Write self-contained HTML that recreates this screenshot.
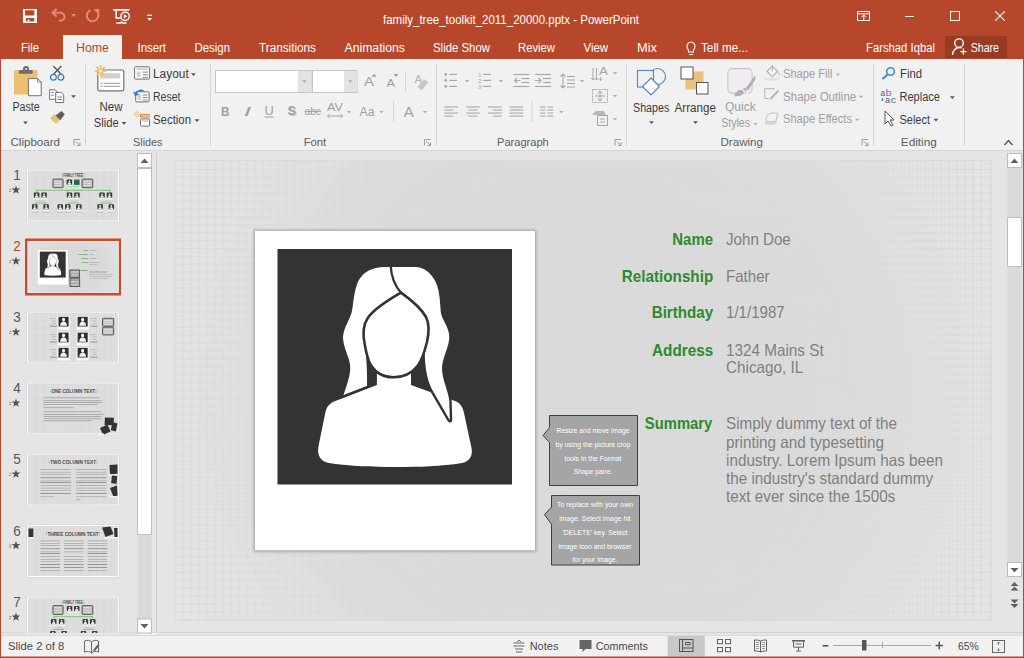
<!DOCTYPE html>
<html><head><meta charset="utf-8"><title>PowerPoint</title>
<style>
html,body{margin:0;padding:0;background:#E5E5E5;}
body{width:1024px;height:658px;overflow:hidden;position:relative;}
svg{position:absolute;left:0;top:0;display:block;}
text{font-family:"Liberation Sans",sans-serif;white-space:pre;}
</style></head><body>
<svg width="1024" height="658" viewBox="0 0 1024 658">
<rect x="0" y="0" width="1024" height="658" fill="#E5E5E5" />
<rect x="0" y="0" width="1024" height="59" fill="#B7472A" />
<rect x="1" y="59" width="1022" height="91" fill="#F1F1F1" />
<rect x="63" y="35" width="59" height="24" fill="#F1F1F1" />
<rect x="1" y="150" width="1022" height="1" fill="#D5D5D5" />
<rect x="1" y="633" width="1022" height="24" fill="#F1F1F1" />
<rect x="1" y="632" width="1022" height="1" fill="#D9D9D9" />
<rect x="23" y="9" width="14" height="14" fill="#FFFFFF" />
<rect x="25" y="10.3" width="9.3" height="5.2" fill="#B7472A" rx="0.8"/>
<rect x="26" y="18" width="8.3" height="3.4" fill="#B7472A" />
<rect x="27.6" y="19.6" width="1.8" height="1.8" fill="#FFFFFF" />
<path d="M52.5,12.8 h8 a4,4 0 0 1 0,8 h-1.5" fill="none" stroke="#D98C78" stroke-width="2" />
<path d="M56.5,9 l-4,3.8 l4,3.8" fill="none" stroke="#D98C78" stroke-width="2" />
<path d="M71,14 h5 l-2.5,2.9 z" fill="#D98C78" stroke="none" stroke-width="1" />
<path d="M90.5,10.3 A5.7,5.7 0 1 0 97.8,13.5" fill="none" stroke="#D98C78" stroke-width="2" />
<path d="M93.6,9.4 h5.2 v5.2 z" fill="#D98C78" stroke="none" stroke-width="1" />
<path d="M93.6,9.6 h5 M98.6,9.6 v4.5" fill="none" stroke="#D98C78" stroke-width="1.4" />
<rect x="113.3" y="9" width="16.1" height="1.7" fill="#FFFFFF" />
<path d="M116.2,10.5 v7.6 h4.6" fill="none" stroke="#FFFFFF" stroke-width="1.5" />
<circle cx="125.1" cy="16.3" r="4.2" fill="none" stroke="#FFFFFF" stroke-width="1.3"/>
<path d="M124,14.6 l2.8,1.7 l-2.8,1.7 z" fill="#FFFFFF" stroke="#FFFFFF" stroke-width="0.6" />
<path d="M116.3,23 h4.3 l0.8,-1.3 l0.8,1.3 h4.3" fill="none" stroke="#FFFFFF" stroke-width="1.3" />
<rect x="147.2" y="14.7" width="4.8" height="1.2" fill="#FFFFFF" />
<path d="M147.2,18 h4.8 l-2.4,2.9 z" fill="#FFFFFF" stroke="none" stroke-width="1" />
<text x="383" y="24" font-size="12" fill="#FFFFFF" textLength="256" lengthAdjust="spacingAndGlyphs" >family_tree_toolkit_2011_20000.pptx - PowerPoint</text>
<rect x="857.5" y="11.5" width="12" height="9" fill="none" stroke="#FFFFFF" stroke-width="1"/>
<line x1="857.5" y1="13.8" x2="869.5" y2="13.8" stroke="#FFFFFF" stroke-width="1" />
<path d="M861.3,17.3 l2.5,-2.5 l2.5,2.5 M863.8,15 v5.5" fill="none" stroke="#FFFFFF" stroke-width="1" />
<line x1="905" y1="16.5" x2="914" y2="16.5" stroke="#FFFFFF" stroke-width="1" />
<rect x="950.5" y="11.5" width="9" height="9" fill="none" stroke="#FFFFFF" stroke-width="1"/>
<path d="M995.3,11.3 l9.4,9.4 M1004.7,11.3 l-9.4,9.4" fill="none" stroke="#FFFFFF" stroke-width="1.1" />
<text x="21" y="51.9" font-size="12" fill="#FFFFFF" textLength="18" lengthAdjust="spacingAndGlyphs" >File</text>
<text x="76" y="51.9" font-size="12" fill="#B7472A" textLength="33" lengthAdjust="spacingAndGlyphs" >Home</text>
<text x="137.5" y="51.9" font-size="12" fill="#FFFFFF" textLength="28.5" lengthAdjust="spacingAndGlyphs" >Insert</text>
<text x="194.5" y="51.9" font-size="12" fill="#FFFFFF" textLength="35.5" lengthAdjust="spacingAndGlyphs" >Design</text>
<text x="259" y="51.9" font-size="12" fill="#FFFFFF" textLength="57" lengthAdjust="spacingAndGlyphs" >Transitions</text>
<text x="344.5" y="51.9" font-size="12" fill="#FFFFFF" textLength="60.5" lengthAdjust="spacingAndGlyphs" >Animations</text>
<text x="433" y="51.9" font-size="12" fill="#FFFFFF" textLength="57" lengthAdjust="spacingAndGlyphs" >Slide Show</text>
<text x="518" y="51.9" font-size="12" fill="#FFFFFF" textLength="37" lengthAdjust="spacingAndGlyphs" >Review</text>
<text x="583.5" y="51.9" font-size="12" fill="#FFFFFF" textLength="24.5" lengthAdjust="spacingAndGlyphs" >View</text>
<text x="637" y="51.9" font-size="12" fill="#FFFFFF" textLength="20" lengthAdjust="spacingAndGlyphs" >Mix</text>
<path d="M688.5,50 a4,4.5 0 1 1 5,0 v2 h-5 z" fill="none" stroke="#FFFFFF" stroke-width="1.1" />
<line x1="689" y1="54.5" x2="693" y2="54.5" stroke="#FFFFFF" stroke-width="1" />
<text x="701" y="51.9" font-size="12" fill="#FFFFFF" textLength="47" lengthAdjust="spacingAndGlyphs" >Tell me...</text>
<text x="866" y="51.9" font-size="12" fill="#FFFFFF" textLength="69" lengthAdjust="spacingAndGlyphs" >Farshad Iqbal</text>
<rect x="945" y="36" width="62" height="22" fill="#973B23" />
<circle cx="959" cy="43.1" r="4.3" fill="none" stroke="#FFFFFF" stroke-width="1.3"/>
<path d="M952.4,55 c0.3,-4 3,-7.5 6.8,-7.5 c1,0 1.8,0.2 2.4,0.5" fill="none" stroke="#FFFFFF" stroke-width="1.3" />
<path d="M963.4,48.5 v6.2 M960.3,51.6 h6.2" fill="none" stroke="#FFFFFF" stroke-width="1.3" />
<text x="970.8" y="51.7" font-size="12.8" fill="#FFFFFF" textLength="28.2" lengthAdjust="spacingAndGlyphs" >Share</text>
<line x1="85.5" y1="64" x2="85.5" y2="146" stroke="#D4D4D4" stroke-width="1" />
<line x1="210.5" y1="64" x2="210.5" y2="146" stroke="#D4D4D4" stroke-width="1" />
<line x1="436.5" y1="64" x2="436.5" y2="146" stroke="#D4D4D4" stroke-width="1" />
<line x1="626.5" y1="64" x2="626.5" y2="146" stroke="#D4D4D4" stroke-width="1" />
<line x1="873.5" y1="64" x2="873.5" y2="146" stroke="#D4D4D4" stroke-width="1" />
<line x1="964.5" y1="64" x2="964.5" y2="146" stroke="#D4D4D4" stroke-width="1" />
<text x="10.5" y="145.6" font-size="11" fill="#5C5C5C" textLength="49.5" lengthAdjust="spacingAndGlyphs" >Clipboard</text>
<text x="133" y="145.6" font-size="11" fill="#5C5C5C" textLength="29.5" lengthAdjust="spacingAndGlyphs" >Slides</text>
<text x="303.75" y="145.6" font-size="11" fill="#5C5C5C" textLength="22.5" lengthAdjust="spacingAndGlyphs" >Font</text>
<text x="497" y="145.6" font-size="11" fill="#5C5C5C" textLength="51.75" lengthAdjust="spacingAndGlyphs" >Paragraph</text>
<text x="720.5" y="145.6" font-size="11" fill="#5C5C5C" textLength="42.5" lengthAdjust="spacingAndGlyphs" >Drawing</text>
<text x="900.8" y="145.6" font-size="11" fill="#5C5C5C" textLength="36" lengthAdjust="spacingAndGlyphs" >Editing</text>
<path d="M74,145.5 v-6 h6" fill="none" stroke="#9A9A9A" stroke-width="1" />
<path d="M76,141.5 l4,4 M80,142.5 v3 h-3" fill="none" stroke="#9A9A9A" stroke-width="1" />
<path d="M424.5,145.5 v-6 h6" fill="none" stroke="#9A9A9A" stroke-width="1" />
<path d="M426.5,141.5 l4,4 M430.5,142.5 v3 h-3" fill="none" stroke="#9A9A9A" stroke-width="1" />
<path d="M615,145.5 v-6 h6" fill="none" stroke="#9A9A9A" stroke-width="1" />
<path d="M617,141.5 l4,4 M621,142.5 v3 h-3" fill="none" stroke="#9A9A9A" stroke-width="1" />
<path d="M862,145.5 v-6 h6" fill="none" stroke="#9A9A9A" stroke-width="1" />
<path d="M864,141.5 l4,4 M868,142.5 v3 h-3" fill="none" stroke="#9A9A9A" stroke-width="1" />
<path d="M1004.5,145 l4,-4.5 l4,4.5" fill="none" stroke="#555" stroke-width="1.4" />
<rect x="14" y="70" width="23.4" height="24.6" fill="#EDC070" rx="1.5"/>
<rect x="18.8" y="70.1" width="13.9" height="3.7" fill="#6E6E6E" rx="0.8"/>
<path d="M23,71 v-2.5 a3,2.5 0 0 1 6,0 v2.5 z" fill="#6E6E6E" stroke="none" stroke-width="1" />
<circle cx="26" cy="69" r="0.9" fill="#F1F1F1"/>
<path d="M28.4,78.6 h9.3 l3.5,3.5 v13.6 h-12.8 z" fill="#FFFFFF" stroke="#707070" stroke-width="1" />
<path d="M37.7,78.6 v3.5 h3.5" fill="none" stroke="#707070" stroke-width="0.8" />
<text x="12.4" y="111.4" font-size="12" fill="#3C3C3C" textLength="27.2" lengthAdjust="spacingAndGlyphs" >Paste</text>
<path d="M23.1,121.6 L27.9,121.6 L25.5,124.3 Z" fill="#555"/>
<path d="M53.3,65.9 l8,8.5 M61.3,65.9 l-8,8.5" fill="none" stroke="#5A5A5A" stroke-width="1.4" />
<circle cx="53.4" cy="77.2" r="2.9" fill="none" stroke="#3E7CC2" stroke-width="1.2"/>
<circle cx="60.9" cy="77.2" r="2.9" fill="none" stroke="#3E7CC2" stroke-width="1.2"/>
<path d="M49.6,89.8 h5.5 l2.5,2.5 v7 h-8 z" fill="#FFF" stroke="#707070" stroke-width="1" />
<path d="M55.7,92.4 h5.5 l2.5,2.5 v7.7 h-8 z" fill="#FFF" stroke="#707070" stroke-width="1" />
<path d="M51.3,92.5 h2.5 M51.3,95.3 h2.5 M57.5,97 h4.5 M57.5,99.5 h4.5" fill="none" stroke="#3E7CC2" stroke-width="0.9" />
<path d="M71.1,95.2 L75.9,95.2 L73.5,97.9 Z" fill="#555"/>
<path d="M50.2,118.2 l4.2,-4.2 l5.8,5.8 l-4.2,4.2 z" fill="#EDC070" stroke="none" stroke-width="1" />
<path d="M55.5,115.5 l6,-4.5 l3.3,3.3 l-4.5,6 z" fill="#5F5F5F" stroke="none" stroke-width="1" />
<rect x="97.8" y="70" width="26" height="20.8" fill="#FFF" rx="1.5" stroke="#707070" stroke-width="1.2"/>
<rect x="100.6" y="73.2" width="19.7" height="5.3" fill="#D0D0D0" />
<path d="M100.6,83.3 h2.2 M103.8,83.3 h16.5 M100.6,86.3 h2.2 M103.8,86.3 h16.5" fill="none" stroke="#8A8A8A" stroke-width="0.9" />
<line x1="102.40" y1="71.00" x2="106.50" y2="71.00" stroke="#EDC070" stroke-width="1.7"/>
<line x1="101.87" y1="72.27" x2="104.77" y2="75.17" stroke="#EDC070" stroke-width="1.7"/>
<line x1="100.60" y1="72.80" x2="100.60" y2="76.90" stroke="#EDC070" stroke-width="1.7"/>
<line x1="99.33" y1="72.27" x2="96.43" y2="75.17" stroke="#EDC070" stroke-width="1.7"/>
<line x1="98.80" y1="71.00" x2="94.70" y2="71.00" stroke="#EDC070" stroke-width="1.7"/>
<line x1="99.33" y1="69.73" x2="96.43" y2="66.83" stroke="#EDC070" stroke-width="1.7"/>
<line x1="100.60" y1="69.20" x2="100.60" y2="65.10" stroke="#EDC070" stroke-width="1.7"/>
<line x1="101.87" y1="69.73" x2="104.77" y2="66.83" stroke="#EDC070" stroke-width="1.7"/>
<circle cx="100.6" cy="71" r="2.4" fill="#EDC070"/>
<circle cx="100.6" cy="71" r="1.3" fill="#FFFFFF"/>
<text x="99.5" y="111.4" font-size="12" fill="#3C3C3C" textLength="23" lengthAdjust="spacingAndGlyphs" >New</text>
<text x="93.75" y="127.4" font-size="12" fill="#3C3C3C" textLength="25" lengthAdjust="spacingAndGlyphs" >Slide</text>
<path d="M121.5,122.05 L126.5,122.05 L124,124.85 Z" fill="#555"/>
<rect x="134.6" y="66.8" width="15" height="12.3" fill="#FFF" rx="1" stroke="#707070" stroke-width="1"/>
<rect x="136.5" y="68.2" width="11.5" height="1.8" fill="#D0D0D0" />
<rect x="136.8" y="71.6" width="3.7" height="5.3" fill="#D0D0D0" />
<path d="M142.7,72.1 h5.3 M142.7,74.8 h5.3 M142.7,77.4 h5.3" fill="none" stroke="#7A7A7A" stroke-width="0.9" />
<text x="153" y="78.4" font-size="12" fill="#3C3C3C" textLength="35.75" lengthAdjust="spacingAndGlyphs" >Layout</text>
<path d="M191.1,73.3 L195.9,73.3 L193.5,76.0 Z" fill="#555"/>
<rect x="135.7" y="91.8" width="13.4" height="10.1" fill="#FFF" rx="1" stroke="#707070" stroke-width="1"/>
<rect x="137.5" y="94.5" width="3.7" height="5.5" fill="#D0D0D0" />
<path d="M142.7,95 h5 M142.7,97.5 h5 M142.7,100 h5" fill="none" stroke="#7A7A7A" stroke-width="0.9" />
<path d="M135.5,94.5 C136.5,91 140,89.5 143.5,91" fill="none" stroke="#3E7CC2" stroke-width="1.6" />
<path d="M133.2,91.5 l1.8,4.8 l4.5,-2 z" fill="#3E7CC2" stroke="none" stroke-width="1" />
<text x="153" y="101.4" font-size="12" fill="#3C3C3C" textLength="27.5" lengthAdjust="spacingAndGlyphs" >Reset</text>
<rect x="140" y="114" width="10.1" height="3.4" fill="#E8823C" rx="1"/>
<rect x="141.5" y="115.2" width="8.6" height="1.1" fill="#F1F1F1" />
<rect x="140.5" y="118.9" width="9.1" height="7.2" fill="#FFF" rx="1" stroke="#707070" stroke-width="1"/>
<path d="M142,121 h6" fill="none" stroke="#A0A0A0" stroke-width="0.9" />
<line x1="137.80" y1="114.10" x2="140.10" y2="114.10" stroke="#EDC070" stroke-width="1"/>
<line x1="137.51" y1="114.81" x2="139.13" y2="116.43" stroke="#EDC070" stroke-width="1"/>
<line x1="136.80" y1="115.10" x2="136.80" y2="117.40" stroke="#EDC070" stroke-width="1"/>
<line x1="136.09" y1="114.81" x2="134.47" y2="116.43" stroke="#EDC070" stroke-width="1"/>
<line x1="135.80" y1="114.10" x2="133.50" y2="114.10" stroke="#EDC070" stroke-width="1"/>
<line x1="136.09" y1="113.39" x2="134.47" y2="111.77" stroke="#EDC070" stroke-width="1"/>
<line x1="136.80" y1="113.10" x2="136.80" y2="110.80" stroke="#EDC070" stroke-width="1"/>
<line x1="137.51" y1="113.39" x2="139.13" y2="111.77" stroke="#EDC070" stroke-width="1"/>
<text x="153" y="124.4" font-size="12" fill="#3C3C3C" textLength="38" lengthAdjust="spacingAndGlyphs" >Section</text>
<path d="M194.6,119.3 L199.4,119.3 L197,122.0 Z" fill="#555"/>
<rect x="215.5" y="70.5" width="95.5" height="22" fill="#FFFFFF" stroke="#C6C6C6" stroke-width="1"/>
<rect x="298" y="71" width="12.5" height="21" fill="#E3E3E3" />
<path d="M302.1,80.3 L306.9,80.3 L304.5,83.0 Z" fill="#B0B0B0"/>
<rect x="312.5" y="70.5" width="44.5" height="22" fill="#FFFFFF" stroke="#C6C6C6" stroke-width="1"/>
<rect x="344" y="71" width="12.5" height="21" fill="#E3E3E3" />
<path d="M348.1,80.3 L352.9,80.3 L350.5,83.0 Z" fill="#B0B0B0"/>
<text x="364" y="86.3" font-size="13.5" fill="#A0A0A0" textLength="10" lengthAdjust="spacingAndGlyphs" >A</text>
<path d="M371.5,76.8 l2.6,-3 l2.6,3 z" fill="#A0A0A0" stroke="none" stroke-width="1" />
<text x="386.5" y="86.5" font-size="11.5" fill="#A0A0A0" textLength="8.5" lengthAdjust="spacingAndGlyphs" >A</text>
<path d="M393.5,74 h5 l-2.5,3 z" fill="#A0A0A0" stroke="none" stroke-width="1" />
<line x1="405.5" y1="71" x2="405.5" y2="92" stroke="#D4D4D4" stroke-width="1" />
<text x="414.5" y="82.5" font-size="10" fill="#B5B5B5" textLength="7.5" lengthAdjust="spacingAndGlyphs" >A</text>
<path d="M419,85 l5,-6 l4,3.5 l-5,6 z" fill="#C4C4C4" stroke="none" stroke-width="1" />
<path d="M417.5,87 l2,-2.5 l4,3.5 l-2,2.5 z" fill="#C9C9C9" stroke="none" stroke-width="1" />
<text x="221" y="115.5" font-size="12" fill="#A0A0A0" font-weight="bold" textLength="8.5" lengthAdjust="spacingAndGlyphs" >B</text>
<text x="243.75" y="115.5" font-size="12" fill="#A0A0A0" textLength="7.5" lengthAdjust="spacingAndGlyphs" font-style="italic" font-family="Liberation Serif">I</text>
<text x="264.5" y="114.9" font-size="12" fill="#A0A0A0" textLength="9.25" lengthAdjust="spacingAndGlyphs" >U</text>
<line x1="264.5" y1="117" x2="273.75" y2="117" stroke="#A0A0A0" stroke-width="1" />
<text x="288.5" y="115.5" font-size="12" fill="#C4C4C4" font-weight="bold" textLength="8.5" lengthAdjust="spacingAndGlyphs" >S</text>
<text x="287.5" y="114.5" font-size="12" fill="#A0A0A0" font-weight="bold" textLength="8.5" lengthAdjust="spacingAndGlyphs" >S</text>
<text x="304.5" y="115" font-size="11" fill="#A0A0A0" textLength="16.5" lengthAdjust="spacingAndGlyphs" >abc</text>
<line x1="304.5" y1="111.5" x2="321" y2="111.5" stroke="#A0A0A0" stroke-width="0.9" />
<text x="327" y="111" font-size="10" fill="#A0A0A0" textLength="16" lengthAdjust="spacingAndGlyphs" >AV</text>
<path d="M327.5,116 h15 M329.5,114 l-2,2 l2,2 M340.5,114 l2,2 l-2,2" fill="none" stroke="#A0A0A0" stroke-width="0.9" />
<path d="M346.8,110.9 L351.2,110.9 L349,113.39999999999999 Z" fill="#B0B0B0"/>
<text x="359.5" y="115.5" font-size="12" fill="#A0A0A0" textLength="15" lengthAdjust="spacingAndGlyphs" >Aa</text>
<path d="M379.3,110.9 L383.7,110.9 L381.5,113.39999999999999 Z" fill="#B0B0B0"/>
<line x1="393.5" y1="101" x2="393.5" y2="122" stroke="#D4D4D4" stroke-width="1" />
<text x="403.75" y="116.5" font-size="14" fill="#A0A0A0" textLength="10" lengthAdjust="spacingAndGlyphs" >A</text>
<path d="M422.8,110.9 L427.2,110.9 L425,113.39999999999999 Z" fill="#B0B0B0"/>
<circle cx="445.7" cy="74.4" r="1.4" fill="#A8A8A8"/>
<line x1="449.3" y1="74.4" x2="457.1" y2="74.4" stroke="#A8A8A8" stroke-width="1.2" />
<circle cx="445.7" cy="80.4" r="1.4" fill="#A8A8A8"/>
<line x1="449.3" y1="80.4" x2="457.1" y2="80.4" stroke="#A8A8A8" stroke-width="1.2" />
<circle cx="445.7" cy="86.4" r="1.4" fill="#A8A8A8"/>
<line x1="449.3" y1="86.4" x2="457.1" y2="86.4" stroke="#A8A8A8" stroke-width="1.2" />
<path d="M464.8,79.9 L469.2,79.9 L467,82.39999999999999 Z" fill="#B0B0B0"/>
<text x="478.0" y="77.2" font-size="6" fill="#A8A8A8" textLength="3.5" lengthAdjust="spacingAndGlyphs" >1</text>
<line x1="483.3" y1="74.4" x2="491.1" y2="74.4" stroke="#A8A8A8" stroke-width="1.2" />
<text x="478.0" y="83.2" font-size="6" fill="#A8A8A8" textLength="3.5" lengthAdjust="spacingAndGlyphs" >2</text>
<line x1="483.3" y1="80.4" x2="491.1" y2="80.4" stroke="#A8A8A8" stroke-width="1.2" />
<text x="478.0" y="89.2" font-size="6" fill="#A8A8A8" textLength="3.5" lengthAdjust="spacingAndGlyphs" >3</text>
<line x1="483.3" y1="86.4" x2="491.1" y2="86.4" stroke="#A8A8A8" stroke-width="1.2" />
<path d="M498.8,79.9 L503.2,79.9 L501,82.39999999999999 Z" fill="#B0B0B0"/>
<line x1="513.5" y1="74.5" x2="529.5" y2="74.5" stroke="#A8A8A8" stroke-width="1.1" />
<line x1="521.5" y1="78.5" x2="529.5" y2="78.5" stroke="#A8A8A8" stroke-width="1.1" />
<line x1="521.5" y1="82.5" x2="529.5" y2="82.5" stroke="#A8A8A8" stroke-width="1.1" />
<line x1="513.5" y1="86.5" x2="529.5" y2="86.5" stroke="#A8A8A8" stroke-width="1.1" />
<path d="M520.5,80.5 h-6 M517.0,78 l-2.5,2.5 l2.5,2.5" fill="none" stroke="#A8A8A8" stroke-width="1.1" />
<line x1="535" y1="74.5" x2="551" y2="74.5" stroke="#A8A8A8" stroke-width="1.1" />
<line x1="543" y1="78.5" x2="551" y2="78.5" stroke="#A8A8A8" stroke-width="1.1" />
<line x1="543" y1="82.5" x2="551" y2="82.5" stroke="#A8A8A8" stroke-width="1.1" />
<line x1="535" y1="86.5" x2="551" y2="86.5" stroke="#A8A8A8" stroke-width="1.1" />
<path d="M535,80.5 h6 M538.5,78 l2.5,2.5 l-2.5,2.5" fill="none" stroke="#A8A8A8" stroke-width="1.1" />
<path d="M563,74 v14 M560.5,76.5 l2.5,-2.5 l2.5,2.5 M560.5,85.5 l2.5,2.5 l2.5,-2.5" fill="none" stroke="#A8A8A8" stroke-width="1.1" />
<line x1="567" y1="76.5" x2="575" y2="76.5" stroke="#A8A8A8" stroke-width="1.1" />
<line x1="567" y1="80.0" x2="575" y2="80.0" stroke="#A8A8A8" stroke-width="1.1" />
<line x1="567" y1="83.5" x2="575" y2="83.5" stroke="#A8A8A8" stroke-width="1.1" />
<line x1="567" y1="87.0" x2="575" y2="87.0" stroke="#A8A8A8" stroke-width="1.1" />
<path d="M579.8,79.9 L584.2,79.9 L582,82.39999999999999 Z" fill="#B0B0B0"/>
<path d="M593,68 v12 M596.5,68 v12 M591,78 l2,2 l2,-2 M594.5,78 l2,2 l2,-2" fill="none" stroke="#A8A8A8" stroke-width="1" />
<text x="599" y="75" font-size="10" fill="#A8A8A8" textLength="9" lengthAdjust="spacingAndGlyphs" >A</text>
<path d="M600.5,77 v3.5 M599,78.5 l1.5,2 l1.5,-2" fill="none" stroke="#A8A8A8" stroke-width="0.9" />
<path d="M612.8,71.9 L617.2,71.9 L615,74.39999999999999 Z" fill="#B0B0B0"/>
<rect x="592.5" y="89.5" width="15" height="13" fill="none" stroke="#A8A8A8" stroke-width="1" stroke-dasharray="2,1"/>
<path d="M600,91 v10 M597.5,93.5 l2.5,-2.5 l2.5,2.5 M597.5,98.5 l2.5,2.5 l2.5,-2.5 M595,96 h10" fill="none" stroke="#A8A8A8" stroke-width="1" />
<path d="M612.8,94.9 L617.2,94.9 L615,97.39999999999999 Z" fill="#B0B0B0"/>
<path d="M592,115 l4,-4 h8 l2,4 z" fill="#B8B8B8" stroke="none" stroke-width="1" />
<rect x="597.5" y="115.5" width="10" height="10" fill="#F1F1F1" stroke="#A8A8A8" stroke-width="1"/>
<path d="M600,119 h5 M600,122 h5" fill="none" stroke="#A8A8A8" stroke-width="1" />
<path d="M612.8,117.9 L617.2,117.9 L615,120.39999999999999 Z" fill="#B0B0B0"/>
<line x1="444.25" y1="107.0" x2="458.0" y2="107.0" stroke="#A8A8A8" stroke-width="1.1" />
<line x1="444.25" y1="110.03" x2="453.25" y2="110.03" stroke="#A8A8A8" stroke-width="1.1" />
<line x1="444.25" y1="113.06" x2="458.0" y2="113.06" stroke="#A8A8A8" stroke-width="1.1" />
<line x1="444.25" y1="116.09" x2="453.25" y2="116.09" stroke="#A8A8A8" stroke-width="1.1" />
<line x1="466.25" y1="107.0" x2="480.0" y2="107.0" stroke="#A8A8A8" stroke-width="1.1" />
<line x1="468.625" y1="110.03" x2="477.625" y2="110.03" stroke="#A8A8A8" stroke-width="1.1" />
<line x1="466.25" y1="113.06" x2="480.0" y2="113.06" stroke="#A8A8A8" stroke-width="1.1" />
<line x1="468.625" y1="116.09" x2="477.625" y2="116.09" stroke="#A8A8A8" stroke-width="1.1" />
<line x1="488.0" y1="107.0" x2="501.75" y2="107.0" stroke="#A8A8A8" stroke-width="1.1" />
<line x1="492.75" y1="110.03" x2="501.75" y2="110.03" stroke="#A8A8A8" stroke-width="1.1" />
<line x1="488.0" y1="113.06" x2="501.75" y2="113.06" stroke="#A8A8A8" stroke-width="1.1" />
<line x1="492.75" y1="116.09" x2="501.75" y2="116.09" stroke="#A8A8A8" stroke-width="1.1" />
<line x1="509.5" y1="107.0" x2="523.25" y2="107.0" stroke="#A8A8A8" stroke-width="1.1" />
<line x1="509.5" y1="110.03" x2="523.25" y2="110.03" stroke="#A8A8A8" stroke-width="1.1" />
<line x1="509.5" y1="113.06" x2="523.25" y2="113.06" stroke="#A8A8A8" stroke-width="1.1" />
<line x1="509.5" y1="116.09" x2="523.25" y2="116.09" stroke="#A8A8A8" stroke-width="1.1" />
<line x1="531.75" y1="101" x2="531.75" y2="122" stroke="#D4D4D4" stroke-width="1" />
<line x1="540" y1="107.0" x2="545.5" y2="107.0" stroke="#A8A8A8" stroke-width="1.1" />
<line x1="547.5" y1="107.0" x2="553.25" y2="107.0" stroke="#A8A8A8" stroke-width="1.1" />
<line x1="540" y1="110.03" x2="545.5" y2="110.03" stroke="#A8A8A8" stroke-width="1.1" />
<line x1="547.5" y1="110.03" x2="553.25" y2="110.03" stroke="#A8A8A8" stroke-width="1.1" />
<line x1="540" y1="113.06" x2="545.5" y2="113.06" stroke="#A8A8A8" stroke-width="1.1" />
<line x1="547.5" y1="113.06" x2="553.25" y2="113.06" stroke="#A8A8A8" stroke-width="1.1" />
<line x1="540" y1="116.09" x2="545.5" y2="116.09" stroke="#A8A8A8" stroke-width="1.1" />
<line x1="547.5" y1="116.09" x2="553.25" y2="116.09" stroke="#A8A8A8" stroke-width="1.1" />
<path d="M559.3,110.9 L563.7,110.9 L561.5,113.39999999999999 Z" fill="#B0B0B0"/>
<circle cx="657.5" cy="76.5" r="8" fill="none" stroke="#4A88CC" stroke-width="1.1"/>
<rect x="637.5" y="70.5" width="16" height="16.5" fill="#F1F1F1" stroke="#4A88CC" stroke-width="1.1"/>
<path d="M651,78 l8.5,8.5 l-8.5,8.5 l-8.5,-8.5 z" fill="#FFFFFF" stroke="#4A88CC" stroke-width="1.2" />
<text x="633" y="112.4" font-size="12" fill="#3C3C3C" textLength="36.25" lengthAdjust="spacingAndGlyphs" >Shapes</text>
<path d="M649.1,121.3 L653.9,121.3 L651.5,124.0 Z" fill="#555"/>
<rect x="685.5" y="71.5" width="18" height="18" fill="#EBC07A" />
<rect x="681" y="67" width="12" height="12" fill="#FFFFFF" stroke="#555" stroke-width="1"/>
<rect x="696.5" y="82.5" width="11.5" height="11.5" fill="#FFFFFF" stroke="#555" stroke-width="1"/>
<text x="674.5" y="112.4" font-size="12" fill="#3C3C3C" textLength="41.5" lengthAdjust="spacingAndGlyphs" >Arrange</text>
<path d="M693.1,121.3 L697.9,121.3 L695.5,124.0 Z" fill="#555"/>
<rect x="727.9" y="68.7" width="24.2" height="24.4" fill="#F1EDF3" rx="4" stroke="#C8C8C8" stroke-width="1.2"/>
<path d="M744,91 l3,-3 l3,3 l-3,3 z" fill="#F1F1F1" stroke="none" stroke-width="1" />
<path d="M745.5,88.5 l9.5,-13 l0.5,3.5 l-7,11 z" fill="#B0B0B0" stroke="none" stroke-width="1" />
<path d="M744.5,87.5 l2.8,2.8 l-1.5,1.5 l-2.8,-2.8 z" fill="#B0B0B0" stroke="none" stroke-width="1" />
<path d="M734,96.3 c1.5,-3 3.5,-6.5 7,-6.5 c1.5,0 2.5,1 2.5,2.5 c0,2.5 -3,4 -9.5,4 z" fill="#B0B0B0" stroke="none" stroke-width="1" />
<text x="725" y="111.3" font-size="12" fill="#A0A0A0" textLength="30.75" lengthAdjust="spacingAndGlyphs" >Quick</text>
<text x="721.25" y="127.3" font-size="12" fill="#A0A0A0" textLength="28.75" lengthAdjust="spacingAndGlyphs" >Styles</text>
<path d="M753.3,122.9 L757.7,122.9 L755.5,125.39999999999999 Z" fill="#B0B0B0"/>
<path d="M767,71.5 l5.3,-5.3 l5.3,5.3 l-5.3,5.3 z" fill="#F5F5F5" stroke="#B0B0B0" stroke-width="1.1" />
<path d="M772.3,71.5 v-6 M777.6,71.5 c1.5,1.5 2,3 1.5,4" fill="none" stroke="#B0B0B0" stroke-width="1" />
<rect x="764.3" y="77.8" width="15.3" height="2.8" fill="#E6DEE8" />
<text x="783" y="78.4" font-size="12" fill="#A0A0A0" textLength="49.5" lengthAdjust="spacingAndGlyphs" >Shape Fill</text>
<path d="M835.5999999999999,73.4 L840.0,73.4 L837.8,75.89999999999999 Z" fill="#B0B0B0"/>
<path d="M774.5,88.7 h-9.7 v9.8 h4" fill="none" stroke="#B0B0B0" stroke-width="1" />
<path d="M770.3,97.8 l7.5,-7.8 l1.3,1.3 l-7.5,7.8 l-1.8,0.5 z" fill="#B0B0B0" stroke="none" stroke-width="1" />
<text x="783" y="100.6" font-size="12" fill="#A0A0A0" textLength="73.25" lengthAdjust="spacingAndGlyphs" >Shape Outline</text>
<path d="M858.8,95.7 L863.2,95.7 L861,98.19999999999999 Z" fill="#B0B0B0"/>
<path d="M765.5,119.5 c0,-4 3,-7 7,-7 l6,0.5 l-1.5,9 c-0.5,2 -2,3 -4,3 h-5 c-2,0 -3,-1 -3,-2 z" fill="#D9D9D9" stroke="none" stroke-width="1" />
<path d="M766.5,118.5 c0.5,-3 2.5,-5.2 5.5,-5.2 h5.5 l-1.2,6 c-0.3,1.5 -1.5,2.3 -3,2.3 h-5 c-1.2,0 -2,-1.2 -1.8,-3.1 z" fill="#F3F3F3" stroke="#BDBDBD" stroke-width="0.8" />
<text x="783" y="123.4" font-size="12" fill="#A0A0A0" textLength="69" lengthAdjust="spacingAndGlyphs" >Shape Effects</text>
<path d="M855.0999999999999,118.7 L859.5,118.7 L857.3,121.19999999999999 Z" fill="#B0B0B0"/>
<circle cx="890.5" cy="71.5" r="3.8" fill="none" stroke="#4A88CC" stroke-width="1.6"/>
<line x1="887.5" y1="74.5" x2="882.5" y2="79" stroke="#4A88CC" stroke-width="2" />
<text x="900" y="78.4" font-size="12" fill="#3C3C3C" textLength="22" lengthAdjust="spacingAndGlyphs" >Find</text>
<text x="880.6" y="95.6" font-size="9" fill="#5A5A5A" textLength="4.6" lengthAdjust="spacingAndGlyphs" >a</text>
<text x="885.8" y="95.6" font-size="9" fill="#9A4DB5" textLength="5.6" lengthAdjust="spacingAndGlyphs" >b</text>
<text x="885" y="102.5" font-size="9" fill="#5A5A5A" textLength="5" lengthAdjust="spacingAndGlyphs" >a</text>
<text x="890.6" y="102.5" font-size="9" fill="#3E7CC2" textLength="5.8" lengthAdjust="spacingAndGlyphs" >c</text>
<path d="M882.5,97.8 v3 l-1.5,-1.3 M882.5,100.8 l1.3,-1.3" fill="none" stroke="#3E7CC2" stroke-width="0.9" />
<text x="899.5" y="101.4" font-size="12" fill="#3C3C3C" textLength="40.5" lengthAdjust="spacingAndGlyphs" >Replace</text>
<path d="M949.9,96.3 L954.6999999999999,96.3 L952.3,99.0 Z" fill="#555"/>
<path d="M885,111 v13 l3,-3 l3,5 l2,-1 l-3,-5 h4 z" fill="#FFF" stroke="#555" stroke-width="1" />
<text x="899.5" y="123.9" font-size="12" fill="#3C3C3C" textLength="30.5" lengthAdjust="spacingAndGlyphs" >Select</text>
<path d="M933.6,118.8 L938.4,118.8 L936,121.5 Z" fill="#555"/>
<line x1="156.5" y1="153" x2="156.5" y2="633" stroke="#CFCFCF" stroke-width="1" />
<rect x="137.5" y="153.5" width="14" height="14" fill="#FFFFFF" stroke="#BDBDBD" stroke-width="1"/>
<path d="M140.5,163 h8 l-4,-4.5 z" fill="#606060" stroke="none" stroke-width="1" />
<rect x="137.5" y="168" width="14" height="451" fill="#DADADA" />
<rect x="137.5" y="168.5" width="14" height="366" fill="#FFFFFF" stroke="#BDBDBD" stroke-width="1"/>
<rect x="137.5" y="619" width="14" height="14" fill="#FFFFFF" stroke="#BDBDBD" stroke-width="1"/>
<path d="M140.5,624 h8 l-4,4.5 z" fill="#606060" stroke="none" stroke-width="1" />
<text x="13.2" y="180.3" font-size="15" fill="#555555" textLength="7.5" lengthAdjust="spacingAndGlyphs" >1</text>
<polygon points="16.00,185.40 17.14,188.44 20.37,188.58 17.84,190.60 18.70,193.72 16.00,191.93 13.30,193.72 14.16,190.60 11.63,188.58 14.86,188.44" fill="#555555"/>
<path d="M9.5,189.5 h2 M9,191.5 h2" stroke="#555" stroke-width="0.6"/>
<rect x="26.5" y="169.0" width="93" height="53" fill="#D2D2D2" />
<rect x="27" y="169.5" width="92" height="52" fill="#FAFAFA" />
<rect x="28" y="170.5" width="90" height="50" fill="#DEDEDE" />
<path d="M35.6,170.5 v50 M43.2,170.5 v50 M50.8,170.5 v50 M58.4,170.5 v50 M66.0,170.5 v50 M73.6,170.5 v50 M81.2,170.5 v50 M88.8,170.5 v50 M96.4,170.5 v50 M104.0,170.5 v50 M111.6,170.5 v50 M28,178.1 h90 M28,185.7 h90 M28,193.3 h90 M28,200.9 h90 M28,208.5 h90 M28,216.1 h90 " fill="none" stroke="#D6D6D6" stroke-width="0.6" />
<text x="13.2" y="251.3" font-size="15" fill="#C43E1C" textLength="7.5" lengthAdjust="spacingAndGlyphs" >2</text>
<polygon points="16.00,256.40 17.14,259.44 20.37,259.58 17.84,261.60 18.70,264.72 16.00,262.93 13.30,264.72 14.16,261.60 11.63,259.58 14.86,259.44" fill="#555555"/>
<path d="M9.5,260.5 h2 M9,262.5 h2" stroke="#555" stroke-width="0.6"/>
<rect x="26.3" y="239.8" width="93.4" height="54.4" fill="none" stroke="#D24726" stroke-width="2.6"/>
<rect x="27.6" y="241.1" width="90.8" height="51.8" fill="#FFFFFF" />
<rect x="28.4" y="241.8" width="90.2" height="50.7" fill="#E3E3E3" />
<text x="13.2" y="322.3" font-size="15" fill="#555555" textLength="7.5" lengthAdjust="spacingAndGlyphs" >3</text>
<polygon points="16.00,327.40 17.14,330.44 20.37,330.58 17.84,332.60 18.70,335.72 16.00,333.93 13.30,335.72 14.16,332.60 11.63,330.58 14.86,330.44" fill="#555555"/>
<path d="M9.5,331.5 h2 M9,333.5 h2" stroke="#555" stroke-width="0.6"/>
<rect x="26.5" y="311.0" width="93" height="53" fill="#D2D2D2" />
<rect x="27" y="311.5" width="92" height="52" fill="#FAFAFA" />
<rect x="28" y="312.5" width="90" height="50" fill="#DEDEDE" />
<path d="M35.6,312.5 v50 M43.2,312.5 v50 M50.8,312.5 v50 M58.4,312.5 v50 M66.0,312.5 v50 M73.6,312.5 v50 M81.2,312.5 v50 M88.8,312.5 v50 M96.4,312.5 v50 M104.0,312.5 v50 M111.6,312.5 v50 M28,320.1 h90 M28,327.7 h90 M28,335.3 h90 M28,342.9 h90 M28,350.5 h90 M28,358.1 h90 " fill="none" stroke="#D6D6D6" stroke-width="0.6" />
<text x="13.2" y="393.3" font-size="15" fill="#555555" textLength="7.5" lengthAdjust="spacingAndGlyphs" >4</text>
<polygon points="16.00,398.40 17.14,401.44 20.37,401.58 17.84,403.60 18.70,406.72 16.00,404.93 13.30,406.72 14.16,403.60 11.63,401.58 14.86,401.44" fill="#555555"/>
<path d="M9.5,402.5 h2 M9,404.5 h2" stroke="#555" stroke-width="0.6"/>
<rect x="26.5" y="382.0" width="93" height="53" fill="#D2D2D2" />
<rect x="27" y="382.5" width="92" height="52" fill="#FAFAFA" />
<rect x="28" y="383.5" width="90" height="50" fill="#DEDEDE" />
<path d="M35.6,383.5 v50 M43.2,383.5 v50 M50.8,383.5 v50 M58.4,383.5 v50 M66.0,383.5 v50 M73.6,383.5 v50 M81.2,383.5 v50 M88.8,383.5 v50 M96.4,383.5 v50 M104.0,383.5 v50 M111.6,383.5 v50 M28,391.1 h90 M28,398.7 h90 M28,406.3 h90 M28,413.9 h90 M28,421.5 h90 M28,429.1 h90 " fill="none" stroke="#D6D6D6" stroke-width="0.6" />
<text x="13.2" y="464.3" font-size="15" fill="#555555" textLength="7.5" lengthAdjust="spacingAndGlyphs" >5</text>
<polygon points="16.00,469.40 17.14,472.44 20.37,472.58 17.84,474.60 18.70,477.72 16.00,475.93 13.30,477.72 14.16,474.60 11.63,472.58 14.86,472.44" fill="#555555"/>
<path d="M9.5,473.5 h2 M9,475.5 h2" stroke="#555" stroke-width="0.6"/>
<rect x="26.5" y="453.0" width="93" height="53" fill="#D2D2D2" />
<rect x="27" y="453.5" width="92" height="52" fill="#FAFAFA" />
<rect x="28" y="454.5" width="90" height="50" fill="#DEDEDE" />
<path d="M35.6,454.5 v50 M43.2,454.5 v50 M50.8,454.5 v50 M58.4,454.5 v50 M66.0,454.5 v50 M73.6,454.5 v50 M81.2,454.5 v50 M88.8,454.5 v50 M96.4,454.5 v50 M104.0,454.5 v50 M111.6,454.5 v50 M28,462.1 h90 M28,469.7 h90 M28,477.3 h90 M28,484.9 h90 M28,492.5 h90 M28,500.1 h90 " fill="none" stroke="#D6D6D6" stroke-width="0.6" />
<text x="13.2" y="535.8" font-size="15" fill="#555555" textLength="7.5" lengthAdjust="spacingAndGlyphs" >6</text>
<polygon points="16.00,540.90 17.14,543.94 20.37,544.08 17.84,546.10 18.70,549.22 16.00,547.43 13.30,549.22 14.16,546.10 11.63,544.08 14.86,543.94" fill="#555555"/>
<path d="M9.5,545 h2 M9,547 h2" stroke="#555" stroke-width="0.6"/>
<rect x="26.5" y="524.5" width="93" height="53" fill="#D2D2D2" />
<rect x="27" y="525" width="92" height="52" fill="#FAFAFA" />
<rect x="28" y="526" width="90" height="50" fill="#DEDEDE" />
<path d="M35.6,526 v50 M43.2,526 v50 M50.8,526 v50 M58.4,526 v50 M66.0,526 v50 M73.6,526 v50 M81.2,526 v50 M88.8,526 v50 M96.4,526 v50 M104.0,526 v50 M111.6,526 v50 M28,533.6 h90 M28,541.2 h90 M28,548.8 h90 M28,556.4 h90 M28,564.0 h90 M28,571.6 h90 " fill="none" stroke="#D6D6D6" stroke-width="0.6" />
<text x="13.2" y="607.3" font-size="15" fill="#555555" textLength="7.5" lengthAdjust="spacingAndGlyphs" >7</text>
<polygon points="16.00,612.40 17.14,615.44 20.37,615.58 17.84,617.60 18.70,620.72 16.00,618.93 13.30,620.72 14.16,617.60 11.63,615.58 14.86,615.44" fill="#555555"/>
<path d="M9.5,616.5 h2 M9,618.5 h2" stroke="#555" stroke-width="0.6"/>
<rect x="26.5" y="596.0" width="93" height="53" fill="#D2D2D2" />
<rect x="27" y="596.5" width="92" height="52" fill="#FAFAFA" />
<rect x="28" y="597.5" width="90" height="50" fill="#DEDEDE" />
<path d="M35.6,597.5 v50 M43.2,597.5 v50 M50.8,597.5 v50 M58.4,597.5 v50 M66.0,597.5 v50 M73.6,597.5 v50 M81.2,597.5 v50 M88.8,597.5 v50 M96.4,597.5 v50 M104.0,597.5 v50 M111.6,597.5 v50 M28,605.1 h90 M28,612.7 h90 M28,620.3 h90 M28,627.9 h90 M28,635.5 h90 M28,643.1 h90 " fill="none" stroke="#D6D6D6" stroke-width="0.6" />
<path d="M62.2,173.1 v4.200000000000017 M84,173.1 v4.200000000000017" fill="none" stroke="#7CC87C" stroke-width="0.6" />
<text x="63.2" y="177.0" font-size="5.000000000000017" fill="#4A4A4A" font-weight="bold" textLength="19.799999999999997" lengthAdjust="spacingAndGlyphs" >FAMILY TREE</text>
<rect x="52.9" y="179.1" width="10.200000000000003" height="8.599999999999994" fill="#BDBDBD" rx="0.8" stroke="#4A4A4A" stroke-width="0.9"/>
<rect x="54.4" y="180.9" width="7.200000000000003" height="0.7" fill="#EDEDED" />
<rect x="54.4" y="183.14000000000001" width="7.200000000000003" height="0.7" fill="#EDEDED" />
<rect x="54.4" y="185.38" width="7.200000000000003" height="0.7" fill="#EDEDED" />
<rect x="82.1" y="179.1" width="10.700000000000003" height="8.599999999999994" fill="#BDBDBD" rx="0.8" stroke="#4A4A4A" stroke-width="0.9"/>
<rect x="83.6" y="180.9" width="7.700000000000003" height="0.7" fill="#EDEDED" />
<rect x="83.6" y="183.14000000000001" width="7.700000000000003" height="0.7" fill="#EDEDED" />
<rect x="83.6" y="185.38" width="7.700000000000003" height="0.7" fill="#EDEDED" />
<rect x="66.6" y="179.6" width="5.5" height="5.2" fill="#3A3A3A" rx="0.8"/>
<ellipse cx="69.35" cy="181.42" rx="0.94" ry="1.04" fill="#E8E8E8"/>
<path d="M67.59,184.80 c0,-1.56 0.55,-2.18 1.76,-2.18 c1.21,0 1.76,0.62 1.76,2.18 z" fill="#E8E8E8" stroke="none" stroke-width="1" />
<rect x="66.3" y="185.2" width="6.1" height="1.2" fill="#F4F4F4" />
<rect x="74" y="179.6" width="5.6" height="5.3" fill="#1E6E55" />
<rect x="67" y="186" width="12" height="0.9" fill="#A8D8A8" />
<path d="M36.7,190.3 h73.3 M36.7,189.5 v3 M67.3,189.5 v3 M110,189.5 v3" fill="none" stroke="#6CC36C" stroke-width="0.9" />
<rect x="33.9" y="192.6" width="5.5" height="5.2" fill="#3A3A3A" rx="0.8"/>
<ellipse cx="36.65" cy="194.42" rx="0.94" ry="1.04" fill="#E8E8E8"/>
<path d="M34.89,197.80 c0,-1.56 0.55,-2.18 1.76,-2.18 c1.21,0 1.76,0.62 1.76,2.18 z" fill="#E8E8E8" stroke="none" stroke-width="1" />
<rect x="33.6" y="198.2" width="6.1" height="1.2" fill="#F4F4F4" />
<rect x="41.3" y="192.6" width="5.5" height="5.2" fill="#3A3A3A" rx="0.8"/>
<ellipse cx="44.05" cy="194.42" rx="0.94" ry="1.04" fill="#E8E8E8"/>
<path d="M42.29,197.80 c0,-1.56 0.55,-2.18 1.76,-2.18 c1.21,0 1.76,0.62 1.76,2.18 z" fill="#E8E8E8" stroke="none" stroke-width="1" />
<rect x="41.0" y="198.2" width="6.1" height="1.2" fill="#F4F4F4" />
<rect x="66.8" y="192.6" width="5.5" height="5.2" fill="#3A3A3A" rx="0.8"/>
<ellipse cx="69.55" cy="194.42" rx="0.94" ry="1.04" fill="#E8E8E8"/>
<path d="M67.79,197.80 c0,-1.56 0.55,-2.18 1.76,-2.18 c1.21,0 1.76,0.62 1.76,2.18 z" fill="#E8E8E8" stroke="none" stroke-width="1" />
<rect x="66.5" y="198.2" width="6.1" height="1.2" fill="#F4F4F4" />
<rect x="74.2" y="192.6" width="5.5" height="5.2" fill="#3A3A3A" rx="0.8"/>
<ellipse cx="76.95" cy="194.42" rx="0.94" ry="1.04" fill="#E8E8E8"/>
<path d="M75.19,197.80 c0,-1.56 0.55,-2.18 1.76,-2.18 c1.21,0 1.76,0.62 1.76,2.18 z" fill="#E8E8E8" stroke="none" stroke-width="1" />
<rect x="73.9" y="198.2" width="6.1" height="1.2" fill="#F4F4F4" />
<rect x="99.3" y="192.6" width="5.5" height="5.2" fill="#3A3A3A" rx="0.8"/>
<ellipse cx="102.05" cy="194.42" rx="0.94" ry="1.04" fill="#E8E8E8"/>
<path d="M100.29,197.80 c0,-1.56 0.55,-2.18 1.76,-2.18 c1.21,0 1.76,0.62 1.76,2.18 z" fill="#E8E8E8" stroke="none" stroke-width="1" />
<rect x="99.0" y="198.2" width="6.1" height="1.2" fill="#F4F4F4" />
<rect x="106.7" y="192.6" width="5.5" height="5.2" fill="#3A3A3A" rx="0.8"/>
<ellipse cx="109.45" cy="194.42" rx="0.94" ry="1.04" fill="#E8E8E8"/>
<path d="M107.69,197.80 c0,-1.56 0.55,-2.18 1.76,-2.18 c1.21,0 1.76,0.62 1.76,2.18 z" fill="#E8E8E8" stroke="none" stroke-width="1" />
<rect x="106.4" y="198.2" width="6.1" height="1.2" fill="#F4F4F4" />
<rect x="36.8" y="200.5" width="7.600000000000001" height="0.9" fill="#B5D5B5" />
<path d="M34.8,203 h11.600000000000001" fill="none" stroke="#6CC36C" stroke-width="0.9" />
<rect x="69.3" y="200.5" width="7.6000000000000085" height="0.9" fill="#B5D5B5" />
<path d="M67.3,203 h11.600000000000009" fill="none" stroke="#6CC36C" stroke-width="0.9" />
<rect x="102.2" y="200.5" width="7.599999999999994" height="0.9" fill="#B5D5B5" />
<path d="M100.2,203 h11.599999999999994" fill="none" stroke="#6CC36C" stroke-width="0.9" />
<rect x="32" y="204.2" width="5.5" height="5.2" fill="#3A3A3A" rx="0.8"/>
<ellipse cx="34.75" cy="206.02" rx="0.94" ry="1.04" fill="#E8E8E8"/>
<path d="M32.99,209.40 c0,-1.56 0.55,-2.18 1.76,-2.18 c1.21,0 1.76,0.62 1.76,2.18 z" fill="#E8E8E8" stroke="none" stroke-width="1" />
<rect x="31.7" y="209.79999999999998" width="6.1" height="1.2" fill="#F4F4F4" />
<rect x="31" y="212" width="7.5" height="0.8" fill="#B8CDB8" />
<rect x="43.4" y="204.2" width="5.5" height="5.2" fill="#3A3A3A" rx="0.8"/>
<ellipse cx="46.15" cy="206.02" rx="0.94" ry="1.04" fill="#E8E8E8"/>
<path d="M44.39,209.40 c0,-1.56 0.55,-2.18 1.76,-2.18 c1.21,0 1.76,0.62 1.76,2.18 z" fill="#E8E8E8" stroke="none" stroke-width="1" />
<rect x="43.1" y="209.79999999999998" width="6.1" height="1.2" fill="#F4F4F4" />
<rect x="42.4" y="212" width="7.5" height="0.8" fill="#B8CDB8" />
<rect x="57.5" y="204.2" width="5.5" height="5.2" fill="#3A3A3A" rx="0.8"/>
<ellipse cx="60.25" cy="206.02" rx="0.94" ry="1.04" fill="#E8E8E8"/>
<path d="M58.49,209.40 c0,-1.56 0.55,-2.18 1.76,-2.18 c1.21,0 1.76,0.62 1.76,2.18 z" fill="#E8E8E8" stroke="none" stroke-width="1" />
<rect x="57.2" y="209.79999999999998" width="6.1" height="1.2" fill="#F4F4F4" />
<rect x="56.5" y="212" width="7.5" height="0.8" fill="#B8CDB8" />
<rect x="65" y="204.2" width="5.5" height="5.2" fill="#3A3A3A" rx="0.8"/>
<ellipse cx="67.75" cy="206.02" rx="0.94" ry="1.04" fill="#E8E8E8"/>
<path d="M65.99,209.40 c0,-1.56 0.55,-2.18 1.76,-2.18 c1.21,0 1.76,0.62 1.76,2.18 z" fill="#E8E8E8" stroke="none" stroke-width="1" />
<rect x="64.7" y="209.79999999999998" width="6.1" height="1.2" fill="#F4F4F4" />
<rect x="64" y="212" width="7.5" height="0.8" fill="#B8CDB8" />
<rect x="76.1" y="204.2" width="5.5" height="5.2" fill="#3A3A3A" rx="0.8"/>
<ellipse cx="78.85" cy="206.02" rx="0.94" ry="1.04" fill="#E8E8E8"/>
<path d="M77.09,209.40 c0,-1.56 0.55,-2.18 1.76,-2.18 c1.21,0 1.76,0.62 1.76,2.18 z" fill="#E8E8E8" stroke="none" stroke-width="1" />
<rect x="75.8" y="209.79999999999998" width="6.1" height="1.2" fill="#F4F4F4" />
<rect x="75.1" y="212" width="7.5" height="0.8" fill="#B8CDB8" />
<rect x="97.4" y="204.2" width="5.5" height="5.2" fill="#3A3A3A" rx="0.8"/>
<ellipse cx="100.15" cy="206.02" rx="0.94" ry="1.04" fill="#E8E8E8"/>
<path d="M98.39,209.40 c0,-1.56 0.55,-2.18 1.76,-2.18 c1.21,0 1.76,0.62 1.76,2.18 z" fill="#E8E8E8" stroke="none" stroke-width="1" />
<rect x="97.10000000000001" y="209.79999999999998" width="6.1" height="1.2" fill="#F4F4F4" />
<rect x="96.4" y="212" width="7.5" height="0.8" fill="#B8CDB8" />
<rect x="108.6" y="204.2" width="5.5" height="5.2" fill="#3A3A3A" rx="0.8"/>
<ellipse cx="111.35" cy="206.02" rx="0.94" ry="1.04" fill="#E8E8E8"/>
<path d="M109.59,209.40 c0,-1.56 0.55,-2.18 1.76,-2.18 c1.21,0 1.76,0.62 1.76,2.18 z" fill="#E8E8E8" stroke="none" stroke-width="1" />
<rect x="108.3" y="209.79999999999998" width="6.1" height="1.2" fill="#F4F4F4" />
<rect x="107.6" y="212" width="7.5" height="0.8" fill="#B8CDB8" />
<use href="#slidec" transform="translate(28.4,241.8) scale(0.1103) translate(-174,-160)"/>
<rect x="69.8" y="270" width="9.7" height="7.7" fill="none" stroke="#4A4A4A" stroke-width="0.8"/>
<rect x="70" y="278.8" width="9.7" height="7.7" fill="none" stroke="#4A4A4A" stroke-width="0.8"/>
<rect x="57.5" y="316" width="12.1" height="13.5" fill="#FAFAFA" />
<rect x="58.5" y="316.8" width="10.1" height="9.719999999999999" fill="#2E2E2E" />
<ellipse cx="63.55" cy="319.78" rx="1.57" ry="2.02" fill="#F2F2F2"/>
<path d="M60.16,325.86 c0,-2.70 1.21,-4.05 3.39,-4.05 c2.18,0 3.39,1.35 3.39,4.05 z" fill="#F2F2F2" stroke="none" stroke-width="1" />
<rect x="57.5" y="331.8" width="12.1" height="13.5" fill="#FAFAFA" />
<rect x="58.5" y="332.6" width="10.1" height="9.719999999999999" fill="#2E2E2E" />
<ellipse cx="63.55" cy="335.58" rx="1.57" ry="2.02" fill="#F2F2F2"/>
<path d="M60.16,341.66 c0,-2.70 1.21,-4.05 3.39,-4.05 c2.18,0 3.39,1.35 3.39,4.05 z" fill="#F2F2F2" stroke="none" stroke-width="1" />
<rect x="57.5" y="347" width="12.1" height="13.5" fill="#FAFAFA" />
<rect x="58.5" y="347.8" width="10.1" height="9.719999999999999" fill="#2E2E2E" />
<ellipse cx="63.55" cy="350.78" rx="1.57" ry="2.02" fill="#F2F2F2"/>
<path d="M60.16,356.86 c0,-2.70 1.21,-4.05 3.39,-4.05 c2.18,0 3.39,1.35 3.39,4.05 z" fill="#F2F2F2" stroke="none" stroke-width="1" />
<rect x="76.6" y="316" width="12.1" height="13.5" fill="#FAFAFA" />
<rect x="77.6" y="316.8" width="10.1" height="9.719999999999999" fill="#2E2E2E" />
<ellipse cx="82.65" cy="319.78" rx="1.57" ry="2.02" fill="#F2F2F2"/>
<path d="M79.26,325.86 c0,-2.70 1.21,-4.05 3.39,-4.05 c2.18,0 3.39,1.35 3.39,4.05 z" fill="#F2F2F2" stroke="none" stroke-width="1" />
<rect x="76.6" y="331.8" width="12.1" height="13.5" fill="#FAFAFA" />
<rect x="77.6" y="332.6" width="10.1" height="9.719999999999999" fill="#2E2E2E" />
<ellipse cx="82.65" cy="335.58" rx="1.57" ry="2.02" fill="#F2F2F2"/>
<path d="M79.26,341.66 c0,-2.70 1.21,-4.05 3.39,-4.05 c2.18,0 3.39,1.35 3.39,4.05 z" fill="#F2F2F2" stroke="none" stroke-width="1" />
<rect x="76.6" y="347" width="12.1" height="13.5" fill="#FAFAFA" />
<rect x="77.6" y="347.8" width="10.1" height="9.719999999999999" fill="#2E2E2E" />
<ellipse cx="82.65" cy="350.78" rx="1.57" ry="2.02" fill="#F2F2F2"/>
<path d="M79.26,356.86 c0,-2.70 1.21,-4.05 3.39,-4.05 c2.18,0 3.39,1.35 3.39,4.05 z" fill="#F2F2F2" stroke="none" stroke-width="1" />
<rect x="50" y="318.3" width="6" height="0.7" fill="#8FCB8F" />
<rect x="52" y="320.8" width="4" height="0.7" fill="#B0B0B0" />
<rect x="52" y="323.2" width="4" height="0.7" fill="#B0B0B0" />
<rect x="50" y="325.7" width="7" height="0.9" fill="#8A8A8A" />
<rect x="90.5" y="318.3" width="6" height="0.7" fill="#8FCB8F" />
<rect x="92.5" y="320.8" width="4" height="0.7" fill="#B0B0B0" />
<rect x="92.5" y="323.2" width="4" height="0.7" fill="#B0B0B0" />
<rect x="90.5" y="325.7" width="7" height="0.9" fill="#8A8A8A" />
<rect x="50" y="334.1" width="6" height="0.7" fill="#8FCB8F" />
<rect x="52" y="336.6" width="4" height="0.7" fill="#B0B0B0" />
<rect x="52" y="339.0" width="4" height="0.7" fill="#B0B0B0" />
<rect x="50" y="341.5" width="7" height="0.9" fill="#8A8A8A" />
<rect x="90.5" y="334.1" width="6" height="0.7" fill="#8FCB8F" />
<rect x="92.5" y="336.6" width="4" height="0.7" fill="#B0B0B0" />
<rect x="92.5" y="339.0" width="4" height="0.7" fill="#B0B0B0" />
<rect x="90.5" y="341.5" width="7" height="0.9" fill="#8A8A8A" />
<rect x="50" y="349.3" width="6" height="0.7" fill="#8FCB8F" />
<rect x="52" y="351.8" width="4" height="0.7" fill="#B0B0B0" />
<rect x="52" y="354.2" width="4" height="0.7" fill="#B0B0B0" />
<rect x="50" y="356.7" width="7" height="0.9" fill="#8A8A8A" />
<rect x="90.5" y="349.3" width="6" height="0.7" fill="#8FCB8F" />
<rect x="92.5" y="351.8" width="4" height="0.7" fill="#B0B0B0" />
<rect x="92.5" y="354.2" width="4" height="0.7" fill="#B0B0B0" />
<rect x="90.5" y="356.7" width="7" height="0.9" fill="#8A8A8A" />
<rect x="102.5" y="318.3" width="11.200000000000003" height="7.899999999999977" fill="#BDBDBD" rx="0.8" stroke="#4A4A4A" stroke-width="0.9"/>
<rect x="104.0" y="320.1" width="8.200000000000003" height="0.7" fill="#EDEDED" />
<rect x="104.0" y="322.06" width="8.200000000000003" height="0.7" fill="#EDEDED" />
<rect x="104.0" y="324.02" width="8.200000000000003" height="0.7" fill="#EDEDED" />
<rect x="102.5" y="327.2" width="11.200000000000003" height="7.699999999999989" fill="#BDBDBD" rx="0.8" stroke="#4A4A4A" stroke-width="0.9"/>
<rect x="104.0" y="329.0" width="8.200000000000003" height="0.7" fill="#EDEDED" />
<rect x="104.0" y="330.88" width="8.200000000000003" height="0.7" fill="#EDEDED" />
<rect x="104.0" y="332.76" width="8.200000000000003" height="0.7" fill="#EDEDED" />
<path d="M50.6,389.8 v3.8000000000000114 M96,389.8 v3.8000000000000114" fill="none" stroke="#7CC87C" stroke-width="0.6" />
<text x="51.6" y="393.3" font-size="4.600000000000011" fill="#4A4A4A" font-weight="bold" textLength="43.4" lengthAdjust="spacingAndGlyphs" >ONE COLUMN TEXT</text>
<rect x="43.6" y="397.5" width="56" height="0.6" fill="#8A8A8A" />
<rect x="43.6" y="400.5" width="58" height="0.6" fill="#8A8A8A" />
<rect x="43.6" y="402.3" width="59" height="0.6" fill="#8A8A8A" />
<rect x="43.6" y="404.4" width="54" height="0.6" fill="#8A8A8A" />
<rect x="43.6" y="407.5" width="30" height="0.6" fill="#8A8A8A" />
<rect x="43.6" y="411.5" width="58" height="0.6" fill="#8A8A8A" />
<rect x="43.6" y="414.3" width="60" height="0.6" fill="#8A8A8A" />
<rect x="43.6" y="416.4" width="58" height="0.6" fill="#8A8A8A" />
<rect x="43.6" y="418.5" width="58" height="0.6" fill="#8A8A8A" />
<rect x="43.6" y="420.5" width="48" height="0.6" fill="#8A8A8A" />
<path d="M105,417.5 l9,0.3 l-0.5,7.5 l-9,-0.3 z" fill="#333" stroke="none" stroke-width="1" />
<path d="M112.5,422 l5,1.5 l-1.7,8 l-5,-1.5 z" fill="#333" stroke="none" stroke-width="1" />
<path d="M100,428 l7.5,-3.5 l3,7 l-7.5,3.5 z" fill="#333" stroke="none" stroke-width="1" />
<rect x="99" y="433.5" width="5" height="1.5" fill="#F4F4F4" />
<path d="M49.2,460.8 v3.6999999999999886 M97,460.8 v3.6999999999999886" fill="none" stroke="#7CC87C" stroke-width="0.6" />
<text x="50.2" y="464.2" font-size="4.4999999999999885" fill="#4A4A4A" font-weight="bold" textLength="45.8" lengthAdjust="spacingAndGlyphs" >TWO COLUMN TEXT</text>
<rect x="40.4" y="469.4" width="30.6" height="0.6" fill="#9A9A9A" />
<rect x="76.1" y="469.4" width="30.6" height="0.6" fill="#9A9A9A" />
<rect x="40.4" y="471.9" width="30.6" height="0.6" fill="#9A9A9A" />
<rect x="76.1" y="471.9" width="30.6" height="0.6" fill="#9A9A9A" />
<rect x="40.4" y="474.4" width="30.6" height="0.6" fill="#9A9A9A" />
<rect x="76.1" y="474.4" width="30.6" height="0.6" fill="#9A9A9A" />
<rect x="40.4" y="477.5" width="30.6" height="0.6" fill="#6A6A6A" />
<rect x="76.1" y="477.5" width="30.6" height="0.6" fill="#6A6A6A" />
<rect x="40.4" y="480.6" width="30.6" height="0.6" fill="#9A9A9A" />
<rect x="76.1" y="480.6" width="30.6" height="0.6" fill="#9A9A9A" />
<rect x="40.4" y="482.4" width="30.6" height="0.6" fill="#6A6A6A" />
<rect x="76.1" y="482.4" width="30.6" height="0.6" fill="#6A6A6A" />
<rect x="40.4" y="485.4" width="30.6" height="0.6" fill="#9A9A9A" />
<rect x="76.1" y="485.4" width="30.6" height="0.6" fill="#9A9A9A" />
<rect x="40.4" y="487.8" width="30.6" height="0.6" fill="#9A9A9A" />
<rect x="76.1" y="487.8" width="30.6" height="0.6" fill="#9A9A9A" />
<rect x="40.4" y="490.3" width="30.6" height="0.6" fill="#9A9A9A" />
<rect x="76.1" y="490.3" width="30.6" height="0.6" fill="#9A9A9A" />
<rect x="40.4" y="493.4" width="30.6" height="0.6" fill="#6A6A6A" />
<rect x="76.1" y="493.4" width="30.6" height="0.6" fill="#6A6A6A" />
<rect x="40.4" y="496.5" width="14" height="0.6" fill="#9A9A9A" />
<rect x="76.1" y="496.5" width="30.6" height="0.6" fill="#9A9A9A" />
<rect x="76.1" y="499.3" width="4" height="0.8" fill="#A2A2A2" />
<path d="M109.5,465 l8,-0.5 v9.3 l-7.5,0.5 z" fill="#333" stroke="none" stroke-width="1" />
<path d="M112,475 l5.3,1 l-0.8,8 l-5.3,-1 z" fill="#333" stroke="none" stroke-width="1" />
<path d="M110,488 l7,-2.5 l0.5,10 l-4,1.5 z" fill="#333" stroke="none" stroke-width="1" />
<rect x="109" y="474.5" width="8" height="1" fill="#F4F4F4" />
<rect x="109" y="496" width="8" height="1.2" fill="#F4F4F4" />
<path d="M46.4,531.8 v4.2000000000000455 M99.7,531.8 v4.2000000000000455" fill="none" stroke="#7CC87C" stroke-width="0.6" />
<text x="47.4" y="535.7" font-size="5.000000000000045" fill="#4A4A4A" font-weight="bold" textLength="51.300000000000004" lengthAdjust="spacingAndGlyphs" >THREE COLUMN TEXT</text>
<rect x="40.4" y="540.6" width="19.5" height="0.6" fill="#9A9A9A" />
<rect x="64" y="540.6" width="19.5" height="0.6" fill="#9A9A9A" />
<rect x="87.7" y="540.6" width="19.5" height="0.6" fill="#9A9A9A" />
<rect x="40.4" y="543.2" width="19.5" height="0.6" fill="#9A9A9A" />
<rect x="64" y="543.2" width="19.5" height="0.6" fill="#9A9A9A" />
<rect x="87.7" y="543.2" width="19.5" height="0.6" fill="#9A9A9A" />
<rect x="40.4" y="545.4" width="19.5" height="0.6" fill="#9A9A9A" />
<rect x="64" y="545.4" width="19.5" height="0.6" fill="#9A9A9A" />
<rect x="87.7" y="545.4" width="19.5" height="0.6" fill="#9A9A9A" />
<rect x="40.4" y="548.5" width="19.5" height="0.6" fill="#6A6A6A" />
<rect x="64" y="548.5" width="19.5" height="0.6" fill="#6A6A6A" />
<rect x="87.7" y="548.5" width="19.5" height="0.6" fill="#6A6A6A" />
<rect x="40.4" y="551.6" width="19.5" height="0.6" fill="#9A9A9A" />
<rect x="64" y="551.6" width="19.5" height="0.6" fill="#9A9A9A" />
<rect x="87.7" y="551.6" width="19.5" height="0.6" fill="#9A9A9A" />
<rect x="40.4" y="553.4" width="19.5" height="0.6" fill="#6A6A6A" />
<rect x="87.7" y="553.4" width="19.5" height="0.6" fill="#6A6A6A" />
<rect x="40.4" y="556.4" width="19.5" height="0.6" fill="#9A9A9A" />
<rect x="64" y="556.4" width="19.5" height="0.6" fill="#9A9A9A" />
<rect x="87.7" y="556.4" width="19.5" height="0.6" fill="#9A9A9A" />
<rect x="40.4" y="559" width="19.5" height="0.6" fill="#9A9A9A" />
<rect x="64" y="559" width="19.5" height="0.6" fill="#9A9A9A" />
<rect x="87.7" y="559" width="19.5" height="0.6" fill="#9A9A9A" />
<rect x="40.4" y="561.3" width="19.5" height="0.6" fill="#9A9A9A" />
<rect x="64" y="561.3" width="19.5" height="0.6" fill="#9A9A9A" />
<rect x="87.7" y="561.3" width="19.5" height="0.6" fill="#9A9A9A" />
<rect x="40.4" y="564.4" width="19.5" height="0.6" fill="#6A6A6A" />
<rect x="64" y="564.4" width="19.5" height="0.6" fill="#6A6A6A" />
<rect x="87.7" y="564.4" width="19.5" height="0.6" fill="#6A6A6A" />
<rect x="40.4" y="567.3" width="19.5" height="0.6" fill="#6A6A6A" />
<rect x="64" y="567.3" width="19.5" height="0.6" fill="#6A6A6A" />
<rect x="87.7" y="567.3" width="19.5" height="0.6" fill="#6A6A6A" />
<rect x="40.4" y="570.3" width="19.5" height="0.6" fill="#9A9A9A" />
<rect x="64" y="570.3" width="19.5" height="0.6" fill="#9A9A9A" />
<rect x="87.7" y="570.3" width="19.5" height="0.6" fill="#9A9A9A" />
<path d="M28.5,528.5 h4.8 v8.5 h-4.8 z" fill="#333" stroke="none" stroke-width="1" />
<rect x="28.5" y="537" width="5" height="1.5" fill="#F4F4F4" />
<path d="M102,527.5 l8.5,-1 l3,7.5 l-8,3 z" fill="#333" stroke="none" stroke-width="1" />
<path d="M114,528 h3.5 v9 h-3 z" fill="#333" stroke="none" stroke-width="1" />
<rect x="104" y="537" width="13" height="1.5" fill="#F4F4F4" />
<path d="M62.2,600.5 v3.7000000000000455 M84,600.5 v3.7000000000000455" fill="none" stroke="#7CC87C" stroke-width="0.6" />
<text x="63.2" y="603.9000000000001" font-size="4.500000000000045" fill="#4A4A4A" font-weight="bold" textLength="19.799999999999997" lengthAdjust="spacingAndGlyphs" >FAMILY TREE</text>
<rect x="52.9" y="605.6" width="10.200000000000003" height="8.799999999999955" fill="#BDBDBD" rx="0.8" stroke="#4A4A4A" stroke-width="0.9"/>
<rect x="54.4" y="607.4" width="7.200000000000003" height="0.7" fill="#EDEDED" />
<rect x="54.4" y="609.7199999999999" width="7.200000000000003" height="0.7" fill="#EDEDED" />
<rect x="54.4" y="612.04" width="7.200000000000003" height="0.7" fill="#EDEDED" />
<rect x="82.1" y="605.6" width="10.700000000000003" height="8.799999999999955" fill="#BDBDBD" rx="0.8" stroke="#4A4A4A" stroke-width="0.9"/>
<rect x="83.6" y="607.4" width="7.700000000000003" height="0.7" fill="#EDEDED" />
<rect x="83.6" y="609.7199999999999" width="7.700000000000003" height="0.7" fill="#EDEDED" />
<rect x="83.6" y="612.04" width="7.700000000000003" height="0.7" fill="#EDEDED" />
<rect x="66.8" y="606" width="5.5" height="5.2" fill="#3A3A3A" rx="0.8"/>
<ellipse cx="69.55" cy="607.82" rx="0.94" ry="1.04" fill="#E8E8E8"/>
<path d="M67.79,611.20 c0,-1.56 0.55,-2.18 1.76,-2.18 c1.21,0 1.76,0.62 1.76,2.18 z" fill="#E8E8E8" stroke="none" stroke-width="1" />
<rect x="66.5" y="611.6" width="6.1" height="1.2" fill="#F4F4F4" />
<rect x="74" y="606" width="5.5" height="5.2" fill="#3A3A3A" rx="0.8"/>
<ellipse cx="76.75" cy="607.82" rx="0.94" ry="1.04" fill="#E8E8E8"/>
<path d="M74.99,611.20 c0,-1.56 0.55,-2.18 1.76,-2.18 c1.21,0 1.76,0.62 1.76,2.18 z" fill="#E8E8E8" stroke="none" stroke-width="1" />
<rect x="73.7" y="611.6" width="6.1" height="1.2" fill="#F4F4F4" />
<path d="M54.3,616.7 h38 M54.3,616 v2.6 M92.3,616 v2.6" fill="none" stroke="#6CC36C" stroke-width="0.9" />
<rect x="51" y="619" width="5.5" height="5.2" fill="#3A3A3A" rx="0.8"/>
<ellipse cx="53.75" cy="620.82" rx="0.94" ry="1.04" fill="#E8E8E8"/>
<path d="M51.99,624.20 c0,-1.56 0.55,-2.18 1.76,-2.18 c1.21,0 1.76,0.62 1.76,2.18 z" fill="#E8E8E8" stroke="none" stroke-width="1" />
<rect x="50.7" y="624.6" width="6.1" height="1.2" fill="#F4F4F4" />
<rect x="58.9" y="619" width="5.5" height="5.2" fill="#3A3A3A" rx="0.8"/>
<ellipse cx="61.65" cy="620.82" rx="0.94" ry="1.04" fill="#E8E8E8"/>
<path d="M59.89,624.20 c0,-1.56 0.55,-2.18 1.76,-2.18 c1.21,0 1.76,0.62 1.76,2.18 z" fill="#E8E8E8" stroke="none" stroke-width="1" />
<rect x="58.6" y="624.6" width="6.1" height="1.2" fill="#F4F4F4" />
<rect x="82.6" y="619" width="5.5" height="5.2" fill="#3A3A3A" rx="0.8"/>
<ellipse cx="85.35" cy="620.82" rx="0.94" ry="1.04" fill="#E8E8E8"/>
<path d="M83.59,624.20 c0,-1.56 0.55,-2.18 1.76,-2.18 c1.21,0 1.76,0.62 1.76,2.18 z" fill="#E8E8E8" stroke="none" stroke-width="1" />
<rect x="82.3" y="624.6" width="6.1" height="1.2" fill="#F4F4F4" />
<rect x="90" y="619" width="5.5" height="5.2" fill="#3A3A3A" rx="0.8"/>
<ellipse cx="92.75" cy="620.82" rx="0.94" ry="1.04" fill="#E8E8E8"/>
<path d="M90.99,624.20 c0,-1.56 0.55,-2.18 1.76,-2.18 c1.21,0 1.76,0.62 1.76,2.18 z" fill="#E8E8E8" stroke="none" stroke-width="1" />
<rect x="89.7" y="624.6" width="6.1" height="1.2" fill="#F4F4F4" />
<rect x="54.4" y="627" width="7.600000000000001" height="0.9" fill="#B5D5B5" />
<path d="M52.4,629.4 h11.600000000000001" fill="none" stroke="#6CC36C" stroke-width="0.9" />
<rect x="85" y="627" width="7.599999999999994" height="0.9" fill="#B5D5B5" />
<path d="M83,629.4 h11.599999999999994" fill="none" stroke="#6CC36C" stroke-width="0.9" />
<rect x="50.1" y="631" width="5.5" height="5.2" fill="#3A3A3A" rx="0.8"/>
<ellipse cx="52.85" cy="632.82" rx="0.94" ry="1.04" fill="#E8E8E8"/>
<path d="M51.09,636.20 c0,-1.56 0.55,-2.18 1.76,-2.18 c1.21,0 1.76,0.62 1.76,2.18 z" fill="#E8E8E8" stroke="none" stroke-width="1" />
<rect x="49.800000000000004" y="636.6" width="6.1" height="1.2" fill="#F4F4F4" />
<rect x="61.3" y="631" width="5.5" height="5.2" fill="#3A3A3A" rx="0.8"/>
<ellipse cx="64.05" cy="632.82" rx="0.94" ry="1.04" fill="#E8E8E8"/>
<path d="M62.29,636.20 c0,-1.56 0.55,-2.18 1.76,-2.18 c1.21,0 1.76,0.62 1.76,2.18 z" fill="#E8E8E8" stroke="none" stroke-width="1" />
<rect x="61.0" y="636.6" width="6.1" height="1.2" fill="#F4F4F4" />
<rect x="80.7" y="631" width="5.5" height="5.2" fill="#3A3A3A" rx="0.8"/>
<ellipse cx="83.45" cy="632.82" rx="0.94" ry="1.04" fill="#E8E8E8"/>
<path d="M81.69,636.20 c0,-1.56 0.55,-2.18 1.76,-2.18 c1.21,0 1.76,0.62 1.76,2.18 z" fill="#E8E8E8" stroke="none" stroke-width="1" />
<rect x="80.4" y="636.6" width="6.1" height="1.2" fill="#F4F4F4" />
<rect x="91.9" y="631" width="5.5" height="5.2" fill="#3A3A3A" rx="0.8"/>
<ellipse cx="94.65" cy="632.82" rx="0.94" ry="1.04" fill="#E8E8E8"/>
<path d="M92.89,636.20 c0,-1.56 0.55,-2.18 1.76,-2.18 c1.21,0 1.76,0.62 1.76,2.18 z" fill="#E8E8E8" stroke="none" stroke-width="1" />
<rect x="91.60000000000001" y="636.6" width="6.1" height="1.2" fill="#F4F4F4" />
<rect x="174.5" y="160.5" width="817" height="460" fill="#CFCFCF" />
<g id="slidec">
<rect x="175" y="161" width="816" height="459" fill="#E5E5E5" />
<path d="M183.00,161 v459 M190.98,161 v459 M198.97,161 v459 M206.95,161 v459 M214.93,161 v459 M222.92,161 v459 M230.90,161 v459 M238.88,161 v459 M246.86,161 v459 M254.85,161 v459 M262.83,161 v459 M270.81,161 v459 M278.80,161 v459 M286.78,161 v459 M294.76,161 v459 M302.75,161 v459 M310.73,161 v459 M318.71,161 v459 M326.69,161 v459 M334.68,161 v459 M342.66,161 v459 M350.64,161 v459 M358.63,161 v459 M366.61,161 v459 M374.59,161 v459 M382.58,161 v459 M390.56,161 v459 M398.54,161 v459 M406.52,161 v459 M414.51,161 v459 M422.49,161 v459 M430.47,161 v459 M438.46,161 v459 M446.44,161 v459 M454.42,161 v459 M462.41,161 v459 M470.39,161 v459 M478.37,161 v459 M486.35,161 v459 M494.34,161 v459 M502.32,161 v459 M510.30,161 v459 M518.29,161 v459 M526.27,161 v459 M534.25,161 v459 M542.24,161 v459 M550.22,161 v459 M558.20,161 v459 M566.18,161 v459 M574.17,161 v459 M582.15,161 v459 M590.13,161 v459 M598.12,161 v459 M606.10,161 v459 M614.08,161 v459 M622.06,161 v459 M630.05,161 v459 M638.03,161 v459 M646.01,161 v459 M654.00,161 v459 M661.98,161 v459 M669.96,161 v459 M677.95,161 v459 M685.93,161 v459 M693.91,161 v459 M701.89,161 v459 M709.88,161 v459 M717.86,161 v459 M725.84,161 v459 M733.83,161 v459 M741.81,161 v459 M749.79,161 v459 M757.78,161 v459 M765.76,161 v459 M773.74,161 v459 M781.72,161 v459 M789.71,161 v459 M797.69,161 v459 M805.67,161 v459 M813.66,161 v459 M821.64,161 v459 M829.62,161 v459 M837.61,161 v459 M845.59,161 v459 M853.57,161 v459 M861.55,161 v459 M869.54,161 v459 M877.52,161 v459 M885.50,161 v459 M893.49,161 v459 M901.47,161 v459 M909.45,161 v459 M917.44,161 v459 M925.42,161 v459 M933.40,161 v459 M941.38,161 v459 M949.37,161 v459 M957.35,161 v459 M965.33,161 v459 M973.32,161 v459 M981.30,161 v459 M989.28,161 v459 M175,169.50 h816 M175,177.40 h816 M175,185.30 h816 M175,193.21 h816 M175,201.11 h816 M175,209.01 h816 M175,216.91 h816 M175,224.81 h816 M175,232.72 h816 M175,240.62 h816 M175,248.52 h816 M175,256.42 h816 M175,264.32 h816 M175,272.23 h816 M175,280.13 h816 M175,288.03 h816 M175,295.93 h816 M175,303.83 h816 M175,311.74 h816 M175,319.64 h816 M175,327.54 h816 M175,335.44 h816 M175,343.34 h816 M175,351.25 h816 M175,359.15 h816 M175,367.05 h816 M175,374.95 h816 M175,382.85 h816 M175,390.76 h816 M175,398.66 h816 M175,406.56 h816 M175,414.46 h816 M175,422.36 h816 M175,430.27 h816 M175,438.17 h816 M175,446.07 h816 M175,453.97 h816 M175,461.87 h816 M175,469.78 h816 M175,477.68 h816 M175,485.58 h816 M175,493.48 h816 M175,501.38 h816 M175,509.29 h816 M175,517.19 h816 M175,525.09 h816 M175,532.99 h816 M175,540.89 h816 M175,548.80 h816 M175,556.70 h816 M175,564.60 h816 M175,572.50 h816 M175,580.40 h816 M175,588.31 h816 M175,596.21 h816 M175,604.11 h816 M175,612.01 h816 M175,619.91 h816 " fill="none" stroke="#DADADA" stroke-width="1" />
<defs><radialGradient id="vg" cx="0.5" cy="0.5" r="0.5" gradientTransform="translate(0.5,0.5) scale(1.15,2.0) translate(-0.5,-0.5)"><stop offset="0" stop-color="#D9D9D9" stop-opacity="0.95"/><stop offset="0.55" stop-color="#D9D9D9" stop-opacity="0.85"/><stop offset="0.85" stop-color="#DCDCDC" stop-opacity="0.4"/><stop offset="1" stop-color="#DFDFDF" stop-opacity="0"/></radialGradient></defs>
<rect x="175" y="161" width="816" height="459" fill="url(#vg)" />
<defs><filter id="sh" x="-10%" y="-10%" width="120%" height="120%"><feGaussianBlur stdDeviation="1.4"/></filter></defs>
<rect x="253.8" y="230" width="282.4" height="321.7" fill="#8E8E8E" filter="url(#sh)" opacity="0.75"/>
<rect x="255" y="231" width="280" height="319.2" fill="#FFFFFF" />
<rect x="277.5" y="249" width="234.5" height="235.5" fill="#333333" />
<path d="M376.9,385 L336,400.8 C330,403 327,406 325.5,412 L318.5,446 C317,455 320,461.5 329,463 C352,466.5 372,467 395.5,467 C419,467 441,466.5 462,463 C470,461.5 473,455 471.5,448 L464,413 C462.5,406 460,403 455,401 L411,385 Z" fill="#FFFFFF" stroke="none" stroke-width="1" />
<rect x="376.9" y="360" width="34.1" height="27" fill="#FFFFFF" />
<path d="M385,265.8 C372,266 362,271 357,281 C352,292 352.5,304 350.5,312 C348.5,320 342,327 341.8,337 C341.6,348 348,356 349,366 C350,375 345,386 341.5,397 L368.3,386.5 C368.3,376 368.2,366 367,352 L380,330 L410,330 L423.5,350 C423.5,366 425.5,381 432,391.8 L448.7,420.5 C450.5,422.5 451.5,421 451,418 L450.5,401 C449.5,390 443,380 443.2,368 C443.4,357 450.5,348 450.5,337 C450.5,326 443,320 442,312 C441,303 441.5,291 437,282 C432,272 425,266 415,265.8 Z" fill="#FFFFFF" stroke="#333333" stroke-width="2.4" />
<path d="M401,292.6 C392,298 374,308 367.5,318.5 C362.5,326 363,335 364.5,343 C366,352 367.5,360 371,365.5 C376,373 384,377.3 393.6,377.3 C403,377.3 412,373 417.5,366 C422.5,359.5 425,350 427,342 C429,333 430,325 426,317 C421,308 410,299 401,292.6 Z" fill="#FFFFFF" stroke="#333333" stroke-width="2.6" />
<path d="M390.6,264.5 C391,275 394,285 401.3,293" fill="none" stroke="#333333" stroke-width="2.3" />
<path d="M549.5,415.5 H637.5 V485.5 H549.5 V442.5 L543,435.5 L549.5,427.5 Z" fill="#A5A5A5" stroke="#3F3F3F" stroke-width="1" />
<text x="556.5" y="433.2" font-size="6.5" fill="#FFFFFF" textLength="73" lengthAdjust="spacingAndGlyphs" >Resize and move image</text>
<text x="555.5" y="447.2" font-size="6.5" fill="#FFFFFF" textLength="75" lengthAdjust="spacingAndGlyphs" >by using the picture crop</text>
<text x="564.5" y="460.8" font-size="6.5" fill="#FFFFFF" textLength="57" lengthAdjust="spacingAndGlyphs" >tools in the Format</text>
<text x="573.65" y="474.4" font-size="6.5" fill="#FFFFFF" textLength="38.7" lengthAdjust="spacingAndGlyphs" >Shape pane.</text>
<path d="M551.5,495.5 H639.5 V565 H551.5 V524.3 L544.5,514.7 L551.5,507 Z" fill="#A5A5A5" stroke="#3F3F3F" stroke-width="1" />
<text x="557.0" y="507.3" font-size="6.5" fill="#FFFFFF" textLength="76" lengthAdjust="spacingAndGlyphs" >To replace with your own</text>
<text x="559.25" y="521" font-size="6.5" fill="#FFFFFF" textLength="71.5" lengthAdjust="spacingAndGlyphs" >image. Select image hit</text>
<text x="562.5" y="534.7" font-size="6.5" fill="#FFFFFF" textLength="65" lengthAdjust="spacingAndGlyphs" >&#x27;DELETE&#x27; key. Select</text>
<text x="558.5" y="548.5" font-size="6.5" fill="#FFFFFF" textLength="73" lengthAdjust="spacingAndGlyphs" >image icon and browser</text>
<text x="572.5" y="562.2" font-size="6.5" fill="#FFFFFF" textLength="45" lengthAdjust="spacingAndGlyphs" >for your image.</text>
<text x="672.3" y="245.3" font-size="16.5" fill="#2D8A2D" font-weight="bold" textLength="40.7" lengthAdjust="spacingAndGlyphs" >Name</text>
<text x="621.8" y="281.6" font-size="16.5" fill="#2D8A2D" font-weight="bold" textLength="91.4" lengthAdjust="spacingAndGlyphs" >Relationship</text>
<text x="651.7" y="318.4" font-size="16.5" fill="#2D8A2D" font-weight="bold" textLength="61.5" lengthAdjust="spacingAndGlyphs" >Birthday</text>
<text x="652" y="355.9" font-size="16.5" fill="#2D8A2D" font-weight="bold" textLength="61.2" lengthAdjust="spacingAndGlyphs" >Address</text>
<text x="644.8" y="429.2" font-size="16.5" fill="#2D8A2D" font-weight="bold" textLength="67.5" lengthAdjust="spacingAndGlyphs" >Summary</text>
<text x="726" y="245.3" font-size="16.5" fill="#7F7F7F" textLength="64.8" lengthAdjust="spacingAndGlyphs" >John Doe</text>
<text x="726" y="281.6" font-size="16.5" fill="#7F7F7F" textLength="43.6" lengthAdjust="spacingAndGlyphs" >Father</text>
<text x="726" y="318.4" font-size="16.5" fill="#7F7F7F" textLength="58.7" lengthAdjust="spacingAndGlyphs" >1/1/1987</text>
<text x="726" y="355.9" font-size="16.5" fill="#7F7F7F" textLength="97.7" lengthAdjust="spacingAndGlyphs" >1324 Mains St</text>
<text x="726" y="373.4" font-size="16.5" fill="#7F7F7F" textLength="77.3" lengthAdjust="spacingAndGlyphs" >Chicago, IL</text>
<text x="726" y="429.4" font-size="16.5" fill="#7F7F7F" textLength="171" lengthAdjust="spacingAndGlyphs" >Simply dummy text of the</text>
<text x="726" y="447.5" font-size="16.5" fill="#7F7F7F" textLength="158" lengthAdjust="spacingAndGlyphs" >printing and typesetting</text>
<text x="726" y="465.6" font-size="16.5" fill="#7F7F7F" textLength="217" lengthAdjust="spacingAndGlyphs" >industry. Lorem Ipsum has been</text>
<text x="726" y="483.7" font-size="16.5" fill="#7F7F7F" textLength="207" lengthAdjust="spacingAndGlyphs" >the industry&#x27;s standard dummy</text>
<text x="726" y="501.8" font-size="16.5" fill="#7F7F7F" textLength="169.4" lengthAdjust="spacingAndGlyphs" >text ever since the 1500s</text>
</g>
<rect x="1007.5" y="153.5" width="14" height="14" fill="#FFFFFF" stroke="#BDBDBD" stroke-width="1"/>
<path d="M1010.5,163 h8 l-4,-4.5 z" fill="#606060" stroke="none" stroke-width="1" />
<rect x="1007.5" y="168" width="14" height="394.5" fill="#DADADA" />
<rect x="1007.5" y="217.5" width="14" height="49" fill="#FFFFFF" stroke="#BDBDBD" stroke-width="1"/>
<rect x="1007.5" y="562.5" width="14" height="14" fill="#FFFFFF" stroke="#BDBDBD" stroke-width="1"/>
<path d="M1010.5,568 h8 l-4,4.5 z" fill="#606060" stroke="none" stroke-width="1" />
<path d="M1010.5,586 h8 l-4,-4 z M1010.5,590.5 h8 l-4,-4 z" fill="#606060" stroke="none" stroke-width="1" />
<path d="M1010.5,599.5 h8 l-4,4 z M1010.5,604 h8 l-4,4 z" fill="#606060" stroke="none" stroke-width="1" />
<rect x="157" y="632" width="866" height="3" fill="#E5E5E5" />
<rect x="1" y="633" width="136" height="2" fill="#E5E5E5" />
<rect x="159" y="632" width="864" height="1" fill="#D2D2D2" />
<rect x="1" y="635" width="1022" height="1" fill="#D9D9D9" />
<rect x="1" y="636" width="1022" height="21" fill="#F1F1F1" />
<text x="8" y="650" font-size="11.5" fill="#4A4A4A" textLength="56.3" lengthAdjust="spacingAndGlyphs" >Slide 2 of 8</text>
<path d="M84.5,641 c3,-1 5,-1 7,1 c2,-2 4,-2 7,-1 v11 c-3,-1 -5,-1 -7,1 c-2,-2 -4,-2 -7,-1 z M91.5,642 v11" fill="none" stroke="#666" stroke-width="1" />
<path d="M93,650 l5,-6 l1.5,1.5 l-5,6 z" fill="#666" stroke="none" stroke-width="1" />
<path d="M513.5,643 h11 M513.5,646 h11 M515,649 h8 M516,652 h6" fill="none" stroke="#666" stroke-width="1" />
<path d="M517,642 l2,-2 l2,2" fill="none" stroke="#666" stroke-width="1" />
<text x="529.7" y="650" font-size="11.5" fill="#4A4A4A" textLength="28.7" lengthAdjust="spacingAndGlyphs" >Notes</text>
<path d="M579.5,640 h12 v9 h-6 l-3,3 v-3 h-3 z" fill="#666" stroke="none" stroke-width="1" />
<text x="595.7" y="650" font-size="11.5" fill="#4A4A4A" textLength="52.3" lengthAdjust="spacingAndGlyphs" >Comments</text>
<rect x="667.7" y="636" width="37.1" height="20.5" fill="#C8C8C8" />
<rect x="679.5" y="639.5" width="13.5" height="12" fill="none" stroke="#555" stroke-width="1"/>
<path d="M682.5,640 v11.5 M682.5,648 h10.5 M685.5,642.5 h4.5 v2.3 h-4.5 z" fill="none" stroke="#555" stroke-width="1" />
<rect x="717.5" y="639.5" width="5" height="4.2" fill="none" stroke="#606060" stroke-width="1"/>
<rect x="725.5" y="639.5" width="5" height="4.2" fill="none" stroke="#606060" stroke-width="1"/>
<rect x="717.5" y="647.5" width="5" height="4.2" fill="none" stroke="#606060" stroke-width="1"/>
<rect x="725.5" y="647.5" width="5" height="4.2" fill="none" stroke="#606060" stroke-width="1"/>
<path d="M754.5,640 c2,0 4,0 6,1 c2,-1 4,-1 6,-1 v11 c-2,0 -4,0 -6,1 c-2,-1 -4,-1 -6,-1 z M760.5,641 v11" fill="none" stroke="#606060" stroke-width="1" />
<path d="M756,642.5 h3 M756,644.5 h3 M756,646.5 h3 M756,648.5 h3 M762,642.5 h3 M762,644.5 h3 M762,646.5 h3 M762,648.5 h3" fill="none" stroke="#808080" stroke-width="0.8" />
<rect x="792" y="640" width="13" height="1.6" fill="#606060" />
<path d="M793.5,641.5 v5.7 h10 v-5.7 M795.5,644 h6 M798.5,647.2 v3.5 M796,651 h5" fill="none" stroke="#606060" stroke-width="1" />
<rect x="822.6" y="645" width="5.7" height="1.6" fill="#555" />
<rect x="833" y="645" width="98" height="1" fill="#A8A8A8" />
<rect x="882" y="642" width="1" height="6" fill="#A8A8A8" />
<rect x="862" y="640" width="4.5" height="10.5" fill="#555" />
<path d="M935.5,645.5 h7.5 M939.25,641.75 v7.5" fill="none" stroke="#555" stroke-width="1.6" />
<text x="958" y="650" font-size="11.5" fill="#4A4A4A" textLength="20.6" lengthAdjust="spacingAndGlyphs" >65%</text>
<rect x="992.5" y="640.5" width="12" height="12" fill="none" stroke="#666" stroke-width="1"/>
<path d="M998.5,642 v3 M997,643.5 l1.5,-1.5 l1.5,1.5 M998.5,651 v-3 M997,649.5 l1.5,1.5 l1.5,-1.5" fill="none" stroke="#666" stroke-width="0.8" />
<rect x="0" y="59" width="1" height="599" fill="#B7472A" />
<rect x="1023" y="59" width="1" height="599" fill="#B7472A" />
<rect x="0" y="656.5" width="1024" height="1.5" fill="#B7472A" />
</svg>
</body></html>
